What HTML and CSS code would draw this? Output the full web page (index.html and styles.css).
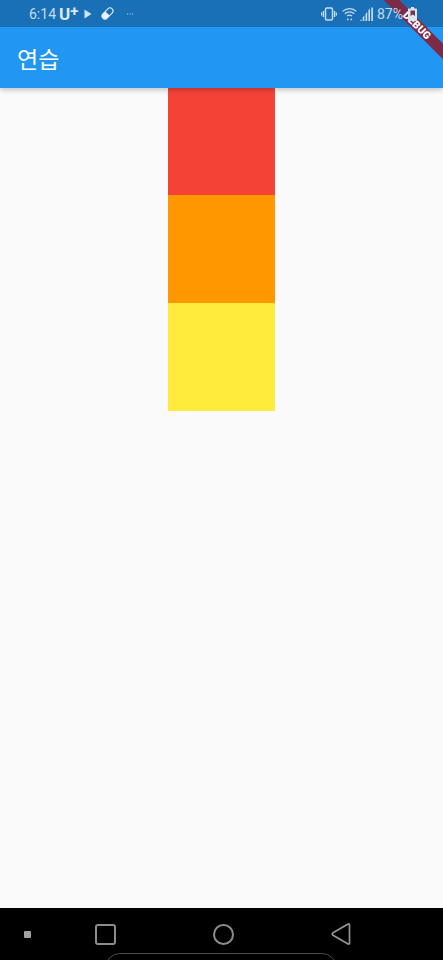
FILE: index.html
```html
<!DOCTYPE html>
<html lang="ko">
<head>
    <meta charset="UTF-8">
    <title>연습</title>
    <link rel="stylesheet" href="styles.css">
</head>
<body>
    <div class="phone">
        <div class="top-bars">
            <div class="status-bar">
                <div class="status-left">
                    <span class="clock">6:14</span>
                    <span class="carrier">U<span class="carrier-plus">+</span></span>
                    <svg class="icon-play" width="8" height="10" viewBox="0 0 8 10"><path d="M.5.500l7 4.500-7 4.500z" fill="#cfe3f3"/></svg>
                    <svg class="icon-pill" width="15" height="15" viewBox="0 0 15 15">
                        <g transform="rotate(-45 7.500 7.500)">
                            <rect x="1" y="4.500" width="13" height="6" rx="3" fill="none" stroke="#e8f1f9" stroke-width="1"/>
                            <path d="M7.500 4.500H4a3 3 0 0 0 0 6h3.500z" fill="#e8f1f9"/>
                        </g>
                    </svg>
                    <svg class="icon-dots" width="6" height="2" viewBox="0 0 6 2" fill="#c4dcf0">
                        <rect x="0" y=".5" width="1" height="1"/><rect x="2.500" y=".5" width="1" height="1"/><rect x="5" y=".5" width="1" height="1"/>
                    </svg>
                </div>
                <div class="status-right">
                    <svg class="icon-vibrate" width="16" height="14" viewBox="0 0 16 14" fill="none" stroke="#c4dcf0">
                        <rect x="4.500" y="1" width="7" height="12" rx="1.300" stroke-width="1.500"/>
                        <path d="M2.400 4v6M13.600 4v6" stroke-width="1.400"/>
                        <path d="M.6 5.500v3M15.400 5.500v3" stroke-width="1.200"/>
                    </svg>
                    <svg class="icon-wifi" width="15" height="14" viewBox="0 0 15 14" fill="none" stroke="#c4dcf0" stroke-width="1.300">
                        <path d="M.6 4.400a9.800 9.800 0 0 1 13.800 0"/>
                        <path d="M2.800 6.800a6.600 6.600 0 0 1 9.400 0"/>
                        <path d="M5 9.100a3.500 3.500 0 0 1 5 0"/>
                        <circle cx="5.700" cy="12.400" r=".9" fill="#c4dcf0" stroke="none"/>
                        <circle cx="9.300" cy="12.400" r=".9" fill="#c4dcf0" stroke="none"/>
                    </svg>
                    <svg class="icon-signal" width="13" height="14" viewBox="0 0 13 14" fill="#c4dcf0">
                        <path d="M0 14l1.500-2v2zM2.700 14v-3.500L4.300 8.500V14zM5.500 14V7l1.700-2.200V14zM8.400 14V3.300L10 1.500V14zM11.300 14V.5H13V14z"/>
                    </svg>
                    <span class="battery-text">87%</span>
                    <svg class="icon-battery" width="9" height="14" viewBox="0 0 9 14">
                        <path d="M3 0h3v1.400h2.200a.8.800 0 0 1 .8.800V13a1 1 0 0 1-1 1H1a1 1 0 0 1-1-1V2.200a.8.800 0 0 1 .8-.8H3z" fill="#dfe4ea"/>
                        <path d="M2.500 3.500h4.500v5.500L4.800 7.500 2.500 9z" fill="#6b3a58"/>
                    </svg>
                </div>
            </div>
            <div class="app-bar">
                <h1 class="app-title">연습</h1>
            </div>
            <div class="debug-banner"><span>DEBUG</span></div>
        </div>

        <div class="content">
            <div class="box box-red"></div>
            <div class="box box-orange"></div>
            <div class="box box-yellow"></div>
        </div>

        <div class="nav-bar">
            <div class="nav-buttons">
                <span class="nav-dot"></span>
                <span class="nav-square"></span>
                <span class="nav-circle"></span>
                <svg class="nav-back" width="20" height="22" viewBox="0 0 20 22" fill="none">
                    <path d="M18.500 1.800v18.400a.9.900 0 0 1-1.400.7L2 12.300a1.500 1.500 0 0 1 0-2.600L17.100 1.100a.9.900 0 0 1 1.400.7z" stroke="#949494" stroke-width="1.700"/>
                </svg>
            </div>
            <div class="gesture-pill"></div>
        </div>
    </div>
</body>
</html>
```

FILE: styles.css
```css
* {
    box-sizing: border-box;
}

html, body {
    margin: 0;
    padding: 0;
}

body {
    font-family: Roboto, "Noto Sans CJK KR", sans-serif;
    background-color: #FAFAFA;
}

.phone {
    position: relative;
    width: 443px;
    height: 960px;
    overflow: hidden;
    display: flex;
    flex-direction: column;
}

.top-bars {
    position: relative;
    z-index: 1;
    box-shadow: 0 2px 5px rgba(0, 0, 0, 0.22);
}

.status-bar {
    height: 27px;
    background-color: #1970B6;
    display: flex;
    align-items: center;
    justify-content: space-between;
    padding: 0 26px 0 29px;
    color: #C4DCF0;
}

.status-left,
.status-right {
    display: flex;
    align-items: center;
}

/* system icons are drawn on top of the ribbon */
.status-right {
    position: relative;
    z-index: 2;
}

.clock {
    font-size: 14px;
    margin-right: 3px;
}

.carrier {
    font-size: 17px;
    font-weight: 700;
    color: #DCEAF6;
    margin-right: 6px;
}

.carrier-plus {
    font-size: 15px;
    position: relative;
    top: -4px;
}

.icon-play {
    margin-right: 8px;
}

.icon-dots {
    margin-left: 12px;
}

.icon-vibrate {
    margin-right: 5px;
}

.icon-wifi {
    margin-right: 3px;
}

.icon-signal {
    margin-right: 4px;
}

.battery-text {
    font-size: 14px;
    color: #C4DCF0;
}

.icon-battery {
    margin-left: 5px;
}

.app-bar {
    height: 61px;
    background-color: #2196F3;
    display: flex;
    align-items: center;
    padding-left: 17px;
}

.app-title {
    margin: 0;
    font-family: "Noto Sans CJK KR", sans-serif;
    font-size: 23px;
    font-weight: 400;
    color: #FFFFFF;
}

.content {
    flex: 1;
    display: flex;
    flex-direction: column;
    align-items: center;
}

.box {
    width: 107.500px;
    height: 108px;
}

.box-red {
    height: 107px;
    background-color: #F44336;
}

.box-orange {
    background-color: #FF9800;
}

.box-yellow {
    background-color: #FFEB3B;
}

.nav-bar {
    position: relative;
    height: 52px;
    background-color: #000000;
}

.nav-buttons {
    height: 52px;
    display: flex;
    align-items: center;
    padding-left: 24px;
}

.nav-dot {
    width: 7px;
    height: 7px;
    border-radius: 1px;
    background-color: #A0A0A0;
    margin-right: 64px;
}

.nav-square {
    width: 21px;
    height: 21px;
    border: 2px solid #8C8C8C;
    border-radius: 3px;
    margin-right: 97px;
}

.nav-circle {
    width: 21px;
    height: 21px;
    border: 2px solid #8C8C8C;
    border-radius: 50%;
    margin-right: 97px;
}

.gesture-pill {
    position: absolute;
    left: 105px;
    top: 45px;
    width: 232px;
    height: 30px;
    border: 1px solid #4A4A4A;
    border-radius: 15px;
}

.debug-banner {
    position: absolute;
    z-index: 1;
    top: 20px;
    left: 367px;
    width: 100px;
    height: 11px;
    transform: rotate(45deg);
    background-color: #7C2A48;
    display: flex;
    align-items: center;
    justify-content: center;
}

.debug-banner span {
    font-size: 10.500px;
    font-weight: 900;
    color: #FFFFFF;
    letter-spacing: 0.200px;
}
```
